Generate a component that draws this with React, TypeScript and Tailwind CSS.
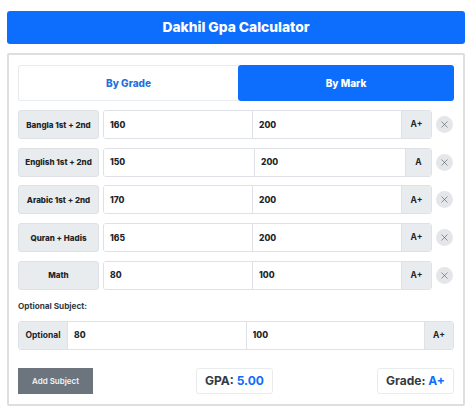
import { X } from 'lucide-react'

const subjects = [
  { name: 'Bangla 1st + 2nd', mark: '160', total: '200', grade: 'A+', gradeW: 'w-[30px]' },
  { name: 'English 1st + 2nd', mark: '150', total: '200', grade: 'A', gradeW: 'w-[26px]' },
  { name: 'Arabic 1st + 2nd', mark: '170', total: '200', grade: 'A+', gradeW: 'w-[30px]' },
  { name: 'Quran + Hadis', mark: '165', total: '200', grade: 'A+', gradeW: 'w-[30px]' },
  { name: 'Math', mark: '80', total: '100', grade: 'A+', gradeW: 'w-[30px]' },
]

function MarkInputs({ mark, total, grade, gradeW }: { mark: string; total: string; grade: string; gradeW: string }) {
  return (
    <>
      <input
        readOnly
        value={mark}
        className="h-full w-0 min-w-0 flex-1 bg-white pl-[6px] text-[8.5px] font-extrabold text-[#212529] outline-none"
      />
      <input
        readOnly
        value={total}
        className="h-full w-0 min-w-0 flex-1 border-l border-[#dee2e6] bg-white pl-[6px] text-[8.5px] font-extrabold text-[#212529] outline-none"
      />
      <span className={`flex h-full shrink-0 items-center justify-center border-l border-[#dee2e6] bg-[#e9ecef] text-[8.5px] font-bold text-[#212529] ${gradeW}`}>
        {grade}
      </span>
    </>
  )
}

export default function App() {
  return (
    <div className="flex h-[410px] w-[474px] flex-col overflow-hidden bg-white px-[7px] pt-[11px] font-['Inter',sans-serif] text-[#212529]">
      <h1 className="flex h-[33px] w-[458px] items-center justify-center rounded-[3px] bg-[#0d6efd] text-[13.8px] font-extrabold text-white">
        Dakhil Gpa Calculator
      </h1>

      <div className="mt-[9px] flex h-[353px] w-[458px] flex-col rounded-[2px] border-2 border-[#dcdfe2] px-[9px] pt-[10px]">
        <div className="flex h-[36px] text-[10px] font-extrabold">
          <div className="flex w-[220px] items-center justify-center rounded-l-[3px] border border-r-0 border-[#e9ecef] text-[#1f6fe0]">
            By Grade
          </div>
          <div className="flex flex-1 items-center justify-center rounded-[3px] bg-[#0d6efd] text-white">By Mark</div>
        </div>

        <div className="mt-[9px] flex flex-col gap-[8.7px]">
          {subjects.map((s) => (
            <div key={s.name} className="flex h-[29px] items-center">
              <span className="flex h-full w-[81px] items-center justify-center rounded-[3px] border border-[#dee2e6] bg-[#e9ecef] text-[8px] font-extrabold whitespace-nowrap">
                {s.name}
              </span>
              <div className="ml-[4px] flex h-full w-[329px] items-center overflow-hidden rounded-[3px] border border-[#dee2e6]">
                <MarkInputs mark={s.mark} total={s.total} grade={s.grade} gradeW={s.gradeW} />
              </div>
              <button className="ml-[4px] flex h-[17px] w-[17px] items-center justify-center rounded-full bg-[#e4e6e9] text-[#495057]">
                <X size={11} strokeWidth={1.25} />
              </button>
            </div>
          ))}
        </div>

        <p className="mt-[10px] text-[8.2px] leading-[12px] font-bold text-[#343a40]">Optional Subject:</p>

        <div className="mt-[9px] flex h-[29px] items-center overflow-hidden rounded-[3px] border border-[#dee2e6]">
          <span className="flex h-full w-[49px] shrink-0 items-center justify-center border-r border-[#dee2e6] bg-[#e9ecef] text-[8.5px] font-bold">
            Optional
          </span>
          <MarkInputs mark="80" total="100" grade="A+" gradeW="w-[29px]" />
        </div>

        <div className="mt-[18px] flex h-[26px] items-center">
          <button className="h-full w-[75px] bg-[#6c757d] text-[8px] font-semibold text-[#f1f3f5]">Add Subject</button>
          <div className="ml-[103px] flex h-full w-[77px] items-center justify-center rounded-[3px] border border-[#e9ecef] text-[12px] font-bold text-[#343a40]">
            GPA:&nbsp;<span className="text-[#0d6efd]">5.00</span>
          </div>
          <div className="ml-auto flex h-full w-[77px] items-center justify-center rounded-[3px] border border-[#e9ecef] text-[12px] font-bold text-[#343a40]">
            Grade:&nbsp;<span className="text-[#0d6efd]">A+</span>
          </div>
        </div>
      </div>
    </div>
  )
}
